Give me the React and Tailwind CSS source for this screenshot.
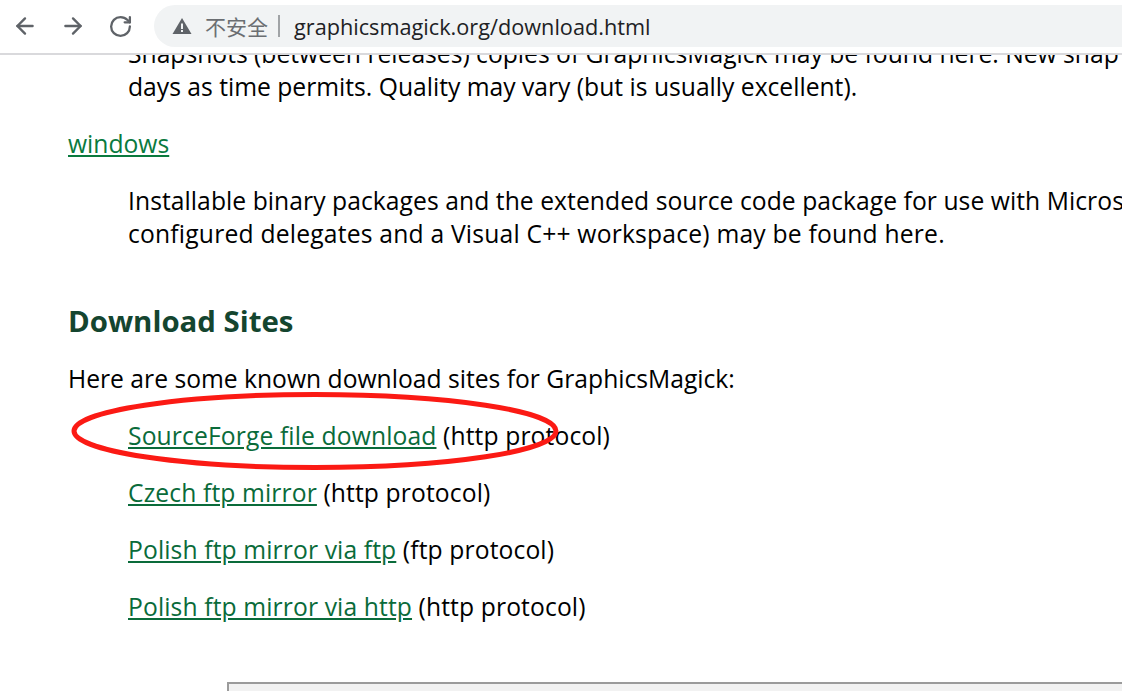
import React from 'react';
import { ArrowLeft, ArrowRight, RotateCw } from 'lucide-react';

const sites = [
    { name: 'SourceForge file download', protocol: '(http protocol)' },
    { name: 'Czech ftp mirror', protocol: '(http protocol)' },
    { name: 'Polish ftp mirror via ftp', protocol: '(ftp protocol)' },
    { name: 'Polish ftp mirror via http', protocol: '(http protocol)' },
];

function Toolbar() {
    return (
        <header className="h-[55px] shrink-0 relative z-10 bg-white border-b-2 border-[#d9d9dc] flex items-center pl-[12px] pb-[1px] text-[#5f6368]">
            <ArrowLeft size={26} strokeWidth={2.2} />
            <ArrowRight size={26} strokeWidth={2.2} className="ml-[22px]" />
            <RotateCw size={25} strokeWidth={2.2} className="ml-[22px]" />
            <div className="ml-[21px] flex-1 h-[42px] bg-[#f1f3f4] rounded-l-[21px] flex items-center pl-[18px]">
                <svg width="20" height="18" viewBox="0 0 20 18">
                    <path d="M10 1 L19.500 17 H0.500 Z" fill="#5f6368" />
                    <rect x="9" y="6.500" width="2" height="5.500" fill="#f1f3f4" />
                    <rect x="9" y="13" width="2" height="2" fill="#f1f3f4" />
                </svg>
                <span className="ml-[13px] text-[21px] text-[#6b6e72] font-['Noto_Sans_CJK_SC',sans-serif]">不安全</span>
                <span className="ml-[10px] w-[2px] h-[22px] bg-[#a0a3a6]" />
                <span className="ml-[14px] text-[21.700px] text-[#202124]">graphicsmagick.org/download.html</span>
            </div>
        </header>
    );
}

function Highlight() {
    return (
        <svg className="absolute left-[70px] top-[390px]" width="490" height="82" viewBox="0 0 490 82" fill="none">
            <ellipse cx="245" cy="41" rx="241" ry="36.500" stroke="#fb1a14" strokeWidth="5" />
        </svg>
    );
}

export default function App() {
    return (
        <div className="relative h-[691px] w-[1122px] overflow-hidden bg-white flex flex-col font-['Open_Sans','Noto_Sans',sans-serif] text-[24.670px] leading-[33px] text-black whitespace-nowrap">
            <Toolbar />
            <main className="flex-1 overflow-hidden pl-[68px]">
                <div className="-mt-[18px]">
                    <p className="pl-[60px]">Snapshots (between releases) copies of GraphicsMagick may be found here. New snap</p>
                    <p className="pl-[60px]">days as time permits. Quality may vary (but is usually excellent).</p>
                    <a href="#" className="block mt-[24px] text-[#0a7a3e] underline">windows</a>
                    <p className="pl-[60px] mt-[24px] tracking-[0.06px]">Installable binary packages and the extended source code package for use with Micros</p>
                    <p className="pl-[60px] tracking-[0.2px]">configured delegates and a Visual C++ workspace) may be found here.</p>
                    <h2 className="mt-[51px] text-[29.400px] leading-[40px] font-bold text-[#14452f]">Download Sites</h2>
                    <p className="mt-[21px]">Here are some known download sites for GraphicsMagick:</p>
                    <ul className="pl-[60px] tracking-[0.12px]">
                        {sites.map(site => (
                            <li key={site.name} className="mt-[24px]">
                                <a href="#" className="text-[#0a6b3a] underline">{site.name}</a> {site.protocol}
                            </li>
                        ))}
                    </ul>
                    <div className="ml-[159px] mt-[59px] h-[20px] bg-[#f2f2f2] border-t-2 border-l-2 border-[#9b9b9b]" />
                </div>
            </main>
            <Highlight />
        </div>
    );
}
